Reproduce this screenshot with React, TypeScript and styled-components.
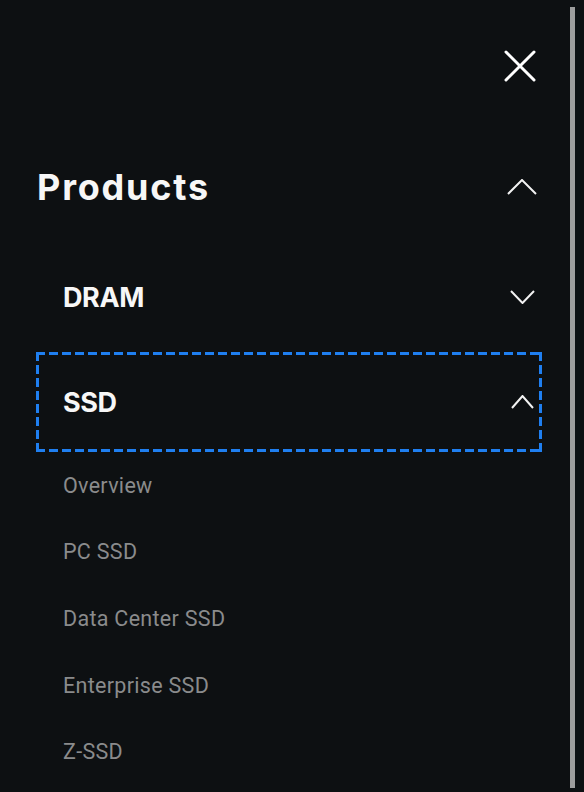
import styled, { createGlobalStyle } from "styled-components";

const GlobalStyle = createGlobalStyle`
  html, body {
    margin: 0;
    padding: 0;
    background: #0d1012;
  }
  * {
    box-sizing: border-box;
  }
`;

const Panel = styled.nav`
  position: relative;
  width: 584px;
  height: 792px;
  overflow: hidden;
  background: #0d1012;
  padding: 0 42px 0 36px;
  font-family: "Inter", "Liberation Sans", sans-serif;
  color: #f7f7f7;
`;

const ScrollThumb = styled.div`
  position: absolute;
  top: 7px;
  right: 9px;
  width: 5px;
  height: 781px;
  background: #9d9d9d;
`;

const TopBar = styled.div`
  height: 132px;
  display: flex;
  align-items: center;
  justify-content: flex-end;
`;

const CloseButton = styled.button`
  width: 32px;
  height: 32px;
  margin-right: 6px;
  padding: 0;
  border: 0;
  background: none;
  display: flex;
  align-items: center;
  justify-content: center;
  cursor: pointer;
`;

const SectionRow = styled.div<{ height: number }>`
  height: ${(p) => p.height}px;
  display: flex;
  align-items: center;
  justify-content: space-between;
`;

const SectionTitle = styled.h2`
  margin: 0;
  font-size: 36px;
  line-height: 1;
  font-weight: 700;
  letter-spacing: 1.8px;
  padding-left: 1px;
`;

const GroupRow = styled.div<{ focused?: boolean }>`
  height: ${(p) => (p.focused ? 100 : 110)}px;
  display: flex;
  align-items: center;
  justify-content: space-between;
  padding-left: 27px;
  ${(p) =>
    p.focused &&
    `
    background-image:
      repeating-linear-gradient(90deg, #1f7ff0 0 9px, transparent 9px 13px),
      repeating-linear-gradient(90deg, #1f7ff0 0 9px, transparent 9px 13px),
      repeating-linear-gradient(180deg, #1f7ff0 0 9px, transparent 9px 13px),
      repeating-linear-gradient(180deg, #1f7ff0 0 9px, transparent 9px 13px);
    background-size: 100% 3px, 100% 3px, 3px 100%, 3px 100%;
    background-position: 0 0, 0 100%, 0 0, 100% 0;
    background-repeat: no-repeat;
  `}
`;

const GroupTitle = styled.h3`
  margin: 0;
  font-size: 27px;
  line-height: 1;
  font-weight: 700;
  letter-spacing: -0.4px;
`;

const Chevron = styled.span<{ offset: number }>`
  display: flex;
  margin-right: ${(p) => p.offset}px;
`;

const SubList = styled.ul`
  list-style: none;
  margin: 0;
  padding: 0 0 0 27px;
`;

const SubItem = styled.li`
  height: 66.6px;
  display: flex;
  align-items: center;
  font-family: "Roboto", "Liberation Sans", sans-serif;
  font-size: 21.5px;
  color: #8a8b8c;
  letter-spacing: 0.3px;
`;

function ChevronIcon({ up, w, h }: { up: boolean; w: number; h: number }) {
  const pts = up ? `1,${h - 1} ${w / 2},1 ${w - 1},${h - 1}` : `1,1 ${w / 2},${h - 1} ${w - 1},1`;
  return (
    <svg width={w} height={h} viewBox={`0 0 ${w} ${h}`} fill="none">
      <polyline points={pts} stroke="#f2f2f2" strokeWidth="2" strokeLinejoin="miter" />
    </svg>
  );
}

const ssdItems = ["Overview", "PC SSD", "Data Center SSD", "Enterprise SSD", "Z-SSD"];

export default function App() {
  return (
    <>
      <GlobalStyle />
      <Panel>
        <TopBar>
          <CloseButton aria-label="Close">
            <svg width="32" height="32" viewBox="0 0 32 32" fill="none">
              <path d="M2 2L30 30M30 2L2 30" stroke="#ffffff" strokeWidth="3" strokeLinecap="round" />
            </svg>
          </CloseButton>
        </TopBar>
        <SectionRow height={110}>
          <SectionTitle>Products</SectionTitle>
          <Chevron offset={5}>
            <ChevronIcon up w={30} h={16} />
          </Chevron>
        </SectionRow>
        <GroupRow>
          <GroupTitle>DRAM</GroupTitle>
          <Chevron offset={7}>
            <ChevronIcon up={false} w={25} h={14} />
          </Chevron>
        </GroupRow>
        <GroupRow focused>
          <GroupTitle>SSD</GroupTitle>
          <Chevron offset={8}>
            <ChevronIcon up w={23} h={14} />
          </Chevron>
        </GroupRow>
        <SubList>
          {ssdItems.map((item) => (
            <SubItem key={item}>{item}</SubItem>
          ))}
        </SubList>
        <ScrollThumb />
      </Panel>
    </>
  );
}
